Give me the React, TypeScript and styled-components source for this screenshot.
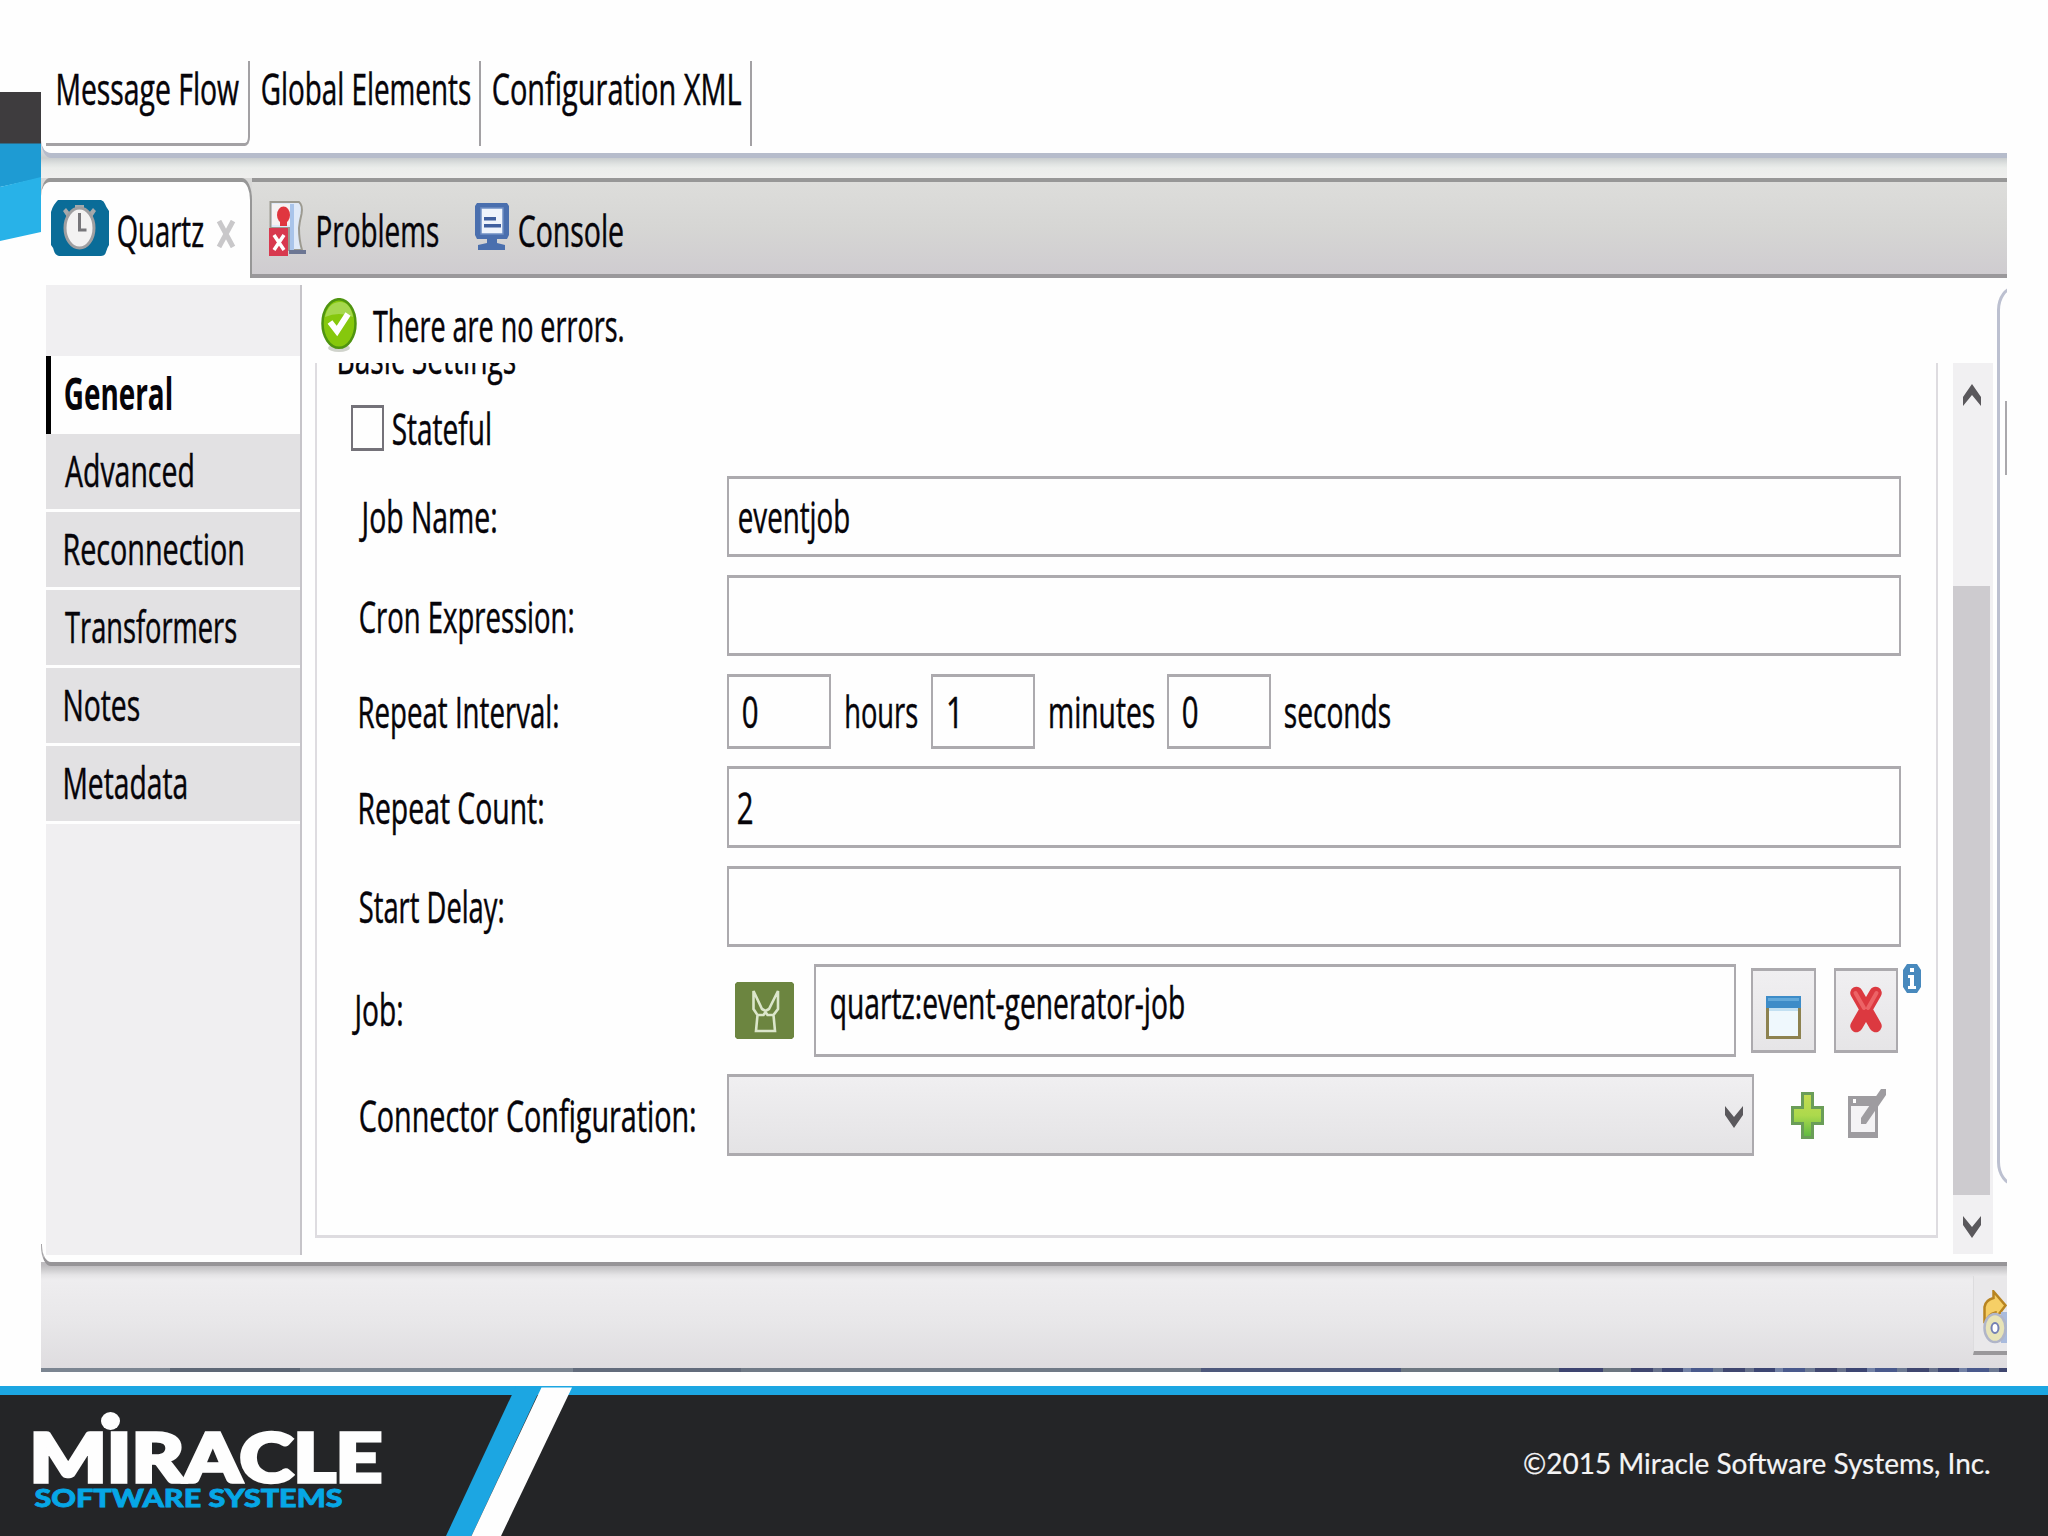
import React, { useLayoutEffect, useState } from 'react';
import styled, { createGlobalStyle } from 'styled-components';

const UI_FONT = '"Open Sans", "Noto Sans", sans-serif';
const BRAND_FONT = 'Lato, "Open Sans", sans-serif';

const GlobalStyle = createGlobalStyle`
  *, *::before, *::after { box-sizing: border-box; }
  body { margin: 0; background: #fefefe; overflow: hidden; }
  svg { display: block; flex: none; }
`;

/* ---------- condensed text fitted to a given ink width ---------- */

const FitBox = styled.span<{ $w: number; $line: number }>`
  display: block;
  flex: none;
  width: ${(p) => p.$w}px;
  height: ${(p) => p.$line}px;
  line-height: ${(p) => p.$line}px;
  white-space: nowrap;
`;

const FitInk = styled.span<{ $size: number; $weight: number; $family: string; $color: string; $stroke: number }>`
  display: inline-block;
  vertical-align: top;
  transform-origin: 0 0;
  font-family: ${(p) => p.$family};
  font-size: ${(p) => p.$size}px;
  font-weight: ${(p) => p.$weight};
  color: ${(p) => p.$color};
  -webkit-text-stroke: ${(p) => p.$stroke}px ${(p) => p.$color};
`;

interface FitProps {
  children: string;
  w: number;
  size?: number;
  line?: number;
  weight?: number;
  family?: string;
  color?: string;
  stroke?: number;
  dx?: number;
  dy?: number;
}

function Fit({
  children,
  w,
  size = 44,
  line = size,
  weight = 400,
  family = UI_FONT,
  color = '#060409',
  stroke = 0.5,
  dx = 1,
  dy = 1,
}: FitProps) {
  const [transform, setTransform] = useState('none');
  useLayoutEffect(() => {
    const ctx = document.createElement('canvas').getContext('2d');
    if (!ctx) return;
    ctx.font = `${weight} ${size}px ${family}`;
    const m = ctx.measureText(children);
    const scale = (w - dx * 2) / (m.actualBoundingBoxLeft + m.actualBoundingBoxRight);
    setTransform(`translate(${m.actualBoundingBoxLeft * scale + dx}px, ${dy}px) scaleX(${scale})`);
  }, [children, w, size, weight, family, dx, dy]);
  return (
    <FitBox $w={w} $line={line}>
      <FitInk $size={size} $weight={weight} $family={family} $color={color} $stroke={stroke} style={{ transform }}>
        {children}
      </FitInk>
    </FitBox>
  );
}

/* ---------- page frame ---------- */

const Slide = styled.div`
  width: 2048px;
  height: 1536px;
  display: flex;
  flex-direction: column;
  overflow: hidden;
  background: #fefefe;
`;

const Stage = styled.div`
  height: 1386px;
  flex: none;
  display: grid;
  grid-template-columns: 41px 1966px 41px;
`;

const Window = styled.div`
  display: flex;
  flex-direction: column;
  height: 1372px;
  background: #fefefe;
  overflow: hidden;
`;

/* ---------- file tabs ---------- */

const FileTabsBack = styled.div`
  flex: none;
  height: 178px;
  display: flex;
  flex-direction: column;
  background: linear-gradient(#fefefe 0 136px, #d8dbde 150px, #c9cdce 158px, #e0e3e2 164px, #ebedeb 168px, #efefee 178px);
`;

const FileTabs = styled.div`
  height: 158px;
  padding: 61px 0 0 5px;
  display: flex;
  align-items: flex-start;
  background: #fefefe;
  border-bottom: 5px solid #b6bccb;
  border-bottom-left-radius: 10px 18px;
`;

const FileTab = styled.div<{ $w: number; $active?: boolean }>`
  width: ${(p) => p.$w}px;
  height: 85px;
  padding: 3px 0 0 11px;
  border-right: 2px solid #a3a1a4;
  ${(p) => p.$active && 'border-bottom: 3px solid #a3a1a4; border-bottom-right-radius: 5px 9px;'}
`;

/* ---------- view tabs ---------- */

const ViewTabs = styled.div`
  flex: none;
  height: 100px;
  display: flex;
  background: #d8d8d7;
`;

const ActiveView = styled.div`
  width: 211px;
  height: 100px;
  padding: 0 0 0 10px;
  display: flex;
  align-items: flex-start;
  background: #fefefe;
  border-top: 4px solid #979797;
  border-right: 2px solid #979797;
  border-top-left-radius: 9px 18px;
  border-top-right-radius: 10px 22px;
`;

const OtherViews = styled.div`
  flex: 1;
  display: flex;
  align-items: flex-start;
  padding-left: 17px;
  background: linear-gradient(#dddddb, #d6d6d4 50%, #cfccd0);
  border-top: 4px solid #979797;
  border-bottom: 4px solid #9a989b;
`;

const Cell = styled.div<{ $top: number; $left?: number }>`
  flex: none;
  margin: ${(p) => p.$top}px 0 0 ${(p) => p.$left ?? 0}px;
`;

const FieldCell = styled.div<{ $left: number }>`
  flex: none;
  height: 100%;
  margin-left: ${(p) => p.$left}px;
`;

/* ---------- editor body ---------- */

const Body = styled.div`
  flex: none;
  height: 984px;
  display: flex;
  padding-left: 5px;
  overflow: hidden;
`;

const SideNav = styled.nav`
  flex: none;
  width: 256px;
  height: 970px;
  margin-top: 7px;
  padding-top: 71px;
  background: #f0eff1;
  border-right: 2px solid #c6c4c9;
`;

const NavItem = styled.div<{ $active?: boolean }>`
  height: 78px;
  padding: ${(p) => (p.$active ? '14px 0 0 13px' : '13px 0 0 18px')};
  background: ${(p) => (p.$active ? '#fefefe' : '#e2e1e3')};
  border-left: ${(p) => (p.$active ? '5px solid #000' : '0')};
  border-bottom: ${(p) => (p.$active ? '0' : '3px solid #fefefe')};
`;

const Content = styled.main`
  flex: none;
  width: 1651px;
  display: flex;
  flex-direction: column;
`;

const StatusLine = styled.div`
  flex: none;
  height: 85px;
  padding: 20px 0 0 19px;
  display: flex;
`;

const Viewport = styled.div`
  flex: none;
  height: 892px;
  overflow: hidden;
`;

const Group = styled.section`
  width: 1623px;
  height: 875px;
  margin-left: 13px;
  border: 2px solid #dedce0;
  border-top: 0;
  border-bottom: 3px solid #dedce0;
  display: flow-root;
`;

const GroupTitle = styled.div`
  margin: -29px 0 0 21px;
  height: 71px;
`;

const CheckRow = styled.div`
  display: flex;
  height: 46px;
  margin: 0 0 25px 34px;
`;

const CheckBox = styled.div`
  width: 33px;
  height: 46px;
  border: solid #747279;
  border-width: 3px 2px;
`;

const Row = styled.div<{ $h: number; $gap?: number }>`
  display: flex;
  align-items: flex-start;
  height: ${(p) => p.$h}px;
  margin-bottom: ${(p) => p.$gap ?? 18}px;
`;

const LabelCell = styled.div<{ $drop: number; $indent?: number }>`
  flex: none;
  width: 410px;
  padding: ${(p) => p.$drop}px 0 0 ${(p) => p.$indent ?? 42}px;
`;

const Field = styled.div<{ $w: number; $drop?: number; $pad?: number }>`
  flex: none;
  width: ${(p) => p.$w}px;
  height: 100%;
  padding: ${(p) => p.$drop ?? 0}px 0 0 ${(p) => p.$pad ?? 0}px;
  border: solid #acaaae;
  border-width: 3px 2px;
`;

const Select = styled(Field)`
  display: flex;
  justify-content: flex-end;
  align-items: flex-start;
  padding: 29px 9px 0 0;
  background: linear-gradient(#f0eff1, #e4e3e5);
`;

const IconButton = styled.div<{ $left: number; $w: number }>`
  flex: none;
  width: ${(p) => p.$w}px;
  height: 85px;
  margin: 4px 0 0 ${(p) => p.$left}px;
  display: flex;
  justify-content: center;
  border: solid #acaaae;
  border-width: 3px 2px;
  background: linear-gradient(#f0eff1, #e6e5e7);
`;

/* ---------- scrollbar and neighbouring panel ---------- */

const ScrollBar = styled.div`
  flex: none;
  width: 40px;
  height: 891px;
  margin-top: 85px;
  display: flex;
  flex-direction: column;
  background: #f1f0f2;
`;

const ScrollGap = styled.div<{ $h: number; $top: number }>`
  height: ${(p) => p.$h}px;
  padding: ${(p) => p.$top}px 0 0 10px;
`;

const Thumb = styled.div`
  width: 37px;
  height: 609px;
  background: #cdcbcf;
`;

const NextPanel = styled.aside`
  flex: none;
  width: 30px;
  height: 900px;
  margin: 8px 0 0 4px;
  padding: 112px 0 0 5px;
  border: 3px solid #bcc0d0;
  border-radius: 18px 0 0 18px / 24px 0 0 24px;
`;

const NextPanelField = styled.div`
  width: 3px;
  height: 74px;
  background: #aaa8ac;
`;

/* ---------- bottom bar ---------- */

const BottomBar = styled.div`
  flex: none;
  height: 110px;
  display: flex;
  justify-content: flex-end;
  align-items: flex-start;
  padding-top: 14px;
  position: relative;
  background: linear-gradient(#bdbbbe 3px, #cfced0 8px, #e5e4e6 13px, #eeedef 18px, #e8e7e9 60px, #dedcdf 107px);
  border-bottom: 4px solid #66707f;
`;

const BottomEdge = styled.div`
  position: absolute;
  left: 0;
  right: 0;
  top: -18px;
  height: 22px;
  border-bottom: 4px solid #979598;
  border-left: 1px solid #a8a6a9;
  border-bottom-left-radius: 10px 20px;
`;

const TaskStrip = styled.div`
  position: absolute;
  left: 0;
  bottom: -4px;
  width: 100%;
  height: 4px;
  background:
    repeating-linear-gradient(90deg, #3f466f 0 22px, #67718b 22px 31px, #3c4572 31px 52px, #7382a6 52px 60px, #49598c 60px 82px, #6d7a93 82px 92px) 1590px 0 / 376px 4px no-repeat,
    linear-gradient(90deg, #7b8591 0 129px, #5d6775 129px 259px, #7b8591 259px 532px, #626b7b 532px 700px, #707a86 700px 1160px, #4d587b 1160px 1360px, #6c7680 1360px 1518px, #3d4470 1518px 1562px, #6c7680 1562px);
`;

const TrayTab = styled.div`
  width: 34px;
  height: 79px;
  padding: 14px 0 0 9px;
  overflow: hidden;
  background: #e9e8ea;
  border-left: 1px solid #dddcde;
  border-bottom: 4px solid #9a989b;
`;

/* ---------- footer ---------- */

const Footer = styled.footer`
  flex: none;
  height: 150px;
  display: flex;
  justify-content: space-between;
  background: #242527;
  border-top: 9px solid #1ca6e2;
`;

const Brand = styled.div`
  position: relative;
  width: 412px;
  padding: 34px 0 0 34px;
`;

const BrandName = styled.div`
  height: 56px;
`;

const BrandDot = styled.span`
  position: absolute;
  left: 101px;
  top: 17px;
  width: 19px;
  height: 18px;
  border-radius: 50%;
  background: #fefefe;
`;

const Slashes = styled.svg`
  margin-top: -9px;
`;

const Legal = styled.div`
  margin-left: auto;
  padding: 54px 58px 0 0;
`;

/* ---------- icons ---------- */

const SideArt = () => (
  <svg width="41" height="1386" viewBox="0 0 41 1386">
    <path d="M0 92h41v52H0z" fill="#3e3c3e" />
    <path d="M0 143.500h41V178L0 187z" fill="#1e9bd3" />
    <path d="M0 187 41 177v55L0 241z" fill="#28b2e8" />
  </svg>
);

const ClockIcon = () => (
  <svg width="58" height="56" viewBox="0 0 58 56">
    <path d="M7 0h43q3 1 4 4t4 7v34q-2 3-3 7t-5 4H8q-4-1-5-5t-3-6V12q1-4 3-7t4-5z" fill="#0a6c98" />
    <path d="M24 5h9v5h-9zM12 11l3-3 4 5-3 4zM45 11l-3-3-4 5 3 4z" fill="#a5a9ac" />
    <ellipse cx="28.500" cy="28" rx="14.500" ry="20" fill="#f3f2f2" stroke="#a09fa1" strokeWidth="3" />
    <path d="M28.500 13v17h7" fill="none" stroke="#77767a" strokeWidth="3" />
  </svg>
);

const CloseIcon = () => (
  <svg width="20" height="28" viewBox="0 0 20 28">
    <path d="M3 1 17 27M17 1 3 27" stroke="#c9c8ca" strokeWidth="5" />
  </svg>
);

const ProblemsIcon = () => (
  <svg width="37" height="56" viewBox="0 0 37 56">
    <path d="M1.500 2H30q4 3 2.500 12-2 8-2.500 14 0 12 3 22H20V28H1.500z" fill="#dfe9f8" stroke="#9c9a90" strokeWidth="2" />
    <path d="M21 4h4v46h-4z" fill="#a9c4ea" />
    <path d="M3 4h18v21H3z" fill="#f6f2f2" />
    <ellipse cx="14.500" cy="15" rx="6.500" ry="8.500" fill="#e0363f" />
    <path d="M11 21h7v5h-7z" fill="#e0363f" />
    <path d="M20 50h17v4H20z" fill="#6c7693" />
    <path d="M0 28h19v28H0z" fill="#d8394f" />
    <path d="m5 35 10 15M15 35 5 50" stroke="#fff" strokeWidth="3.500" />
  </svg>
);

const ConsoleIcon = () => (
  <svg width="34" height="47" viewBox="0 0 34 47">
    <path d="M2 0h30l2 3v29l-2 4H2l-2-4V3z" fill="#4a6fae" />
    <path d="M6 5h22v26H6z" fill="#eff4fc" stroke="#6f8fc4" strokeWidth="1.500" />
    <path d="M9 14h12v3.500H9zM9 21h17v3.500H9z" fill="#3f5f9f" />
    <path d="M12 36h10v4l8 2v5H3v-5l9-2z" fill="#4a6fae" />
  </svg>
);

const OkIcon = () => (
  <svg width="36" height="54" viewBox="0 0 36 54">
    <ellipse cx="18" cy="50" rx="11" ry="4" fill="#d0d3cc" />
    <ellipse cx="18" cy="25.500" rx="16.500" ry="24.300" fill="#86c80c" stroke="#4f9410" strokeWidth="2.500" />
    <path d="M4 19Q7 5 18 4t14 15q-14-6-28 0z" fill="#a6d84e" />
    <path d="m9 24 7 9 11-17" fill="none" stroke="#fff" strokeWidth="6" />
  </svg>
);

const MuleIcon = () => (
  <svg width="59" height="57" viewBox="0 0 59 57">
    <path d="M2 0h55l2 2v53l-2 2H2l-2-2V2z" fill="#6c8540" />
    <path
      d="M18.500 9v18l4 6-1.500 16h19l-1.500-16 4.500-6V9l-9 18-3.500 2-3.500-2zM22.500 33h6l2-3 2 3h6"
      fill="none"
      stroke="#dbe6ca"
      strokeWidth="2.600"
    />
  </svg>
);

const WindowIcon = () => (
  <svg width="35" height="43" viewBox="0 0 35 43">
    <path d="M1.500 1h32v40.500h-32z" fill="#eff8fd" stroke="#8d8250" strokeWidth="3" />
    <path d="M0 0h35v12H0z" fill="#3d8cc8" />
    <path d="M2 2h31v3H2z" fill="#63a9da" />
    <path d="M3 12h29v3H3z" fill="#c2e0f2" />
  </svg>
);

const DeleteIcon = () => (
  <svg width="34" height="49" viewBox="0 0 34 49">
    <path d="M7.500 8 26.500 41M26.500 8 7.500 41" fill="none" stroke="#dc3940" strokeWidth="12.500" strokeLinecap="round" />
    <path d="M6.500 8 15 23M27.500 8 19 23" fill="none" stroke="#ec6366" strokeWidth="4" strokeLinecap="round" />
  </svg>
);

const InfoIcon = () => (
  <svg width="18" height="29" viewBox="0 0 18 29">
    <path d="M4 0h10l4 6v17l-4 6H4l-4-6V6z" fill="#4889bd" />
    <path d="M7 4h4v4H7zM5 11h6v11h2v3H5v-3h2v-8H5z" fill="#fff" />
  </svg>
);

const PlusIcon = () => (
  <svg width="33" height="47" viewBox="0 0 33 47">
    <defs>
      <linearGradient id="plus" x1="0" y1="0" x2="0" y2="1">
        <stop offset="0" stopColor="#c4dc52" />
        <stop offset=".5" stopColor="#acd94c" />
        <stop offset="1" stopColor="#5cb842" />
      </linearGradient>
    </defs>
    <path d="M11.500 1.500h10v14h10v16h-10v14h-10v-14h-10v-16h10z" fill="url(#plus)" stroke="#6a9d58" strokeWidth="3" />
  </svg>
);

const EditIcon = () => (
  <svg width="38" height="50" viewBox="0 0 38 50">
    <path d="M1.500 10h27v37h-27z" fill="#f4f3f5" stroke="#9e9ca0" strokeWidth="3" />
    <path d="M0 7h30v10H0zM0 43h30v6H0z" fill="#9e9ca0" />
    <path d="M5 10h3v4H5z" fill="#fff" />
    <path d="M38 0v6L18 35h-5v-6L33 0z" fill="#9e9ca0" />
  </svg>
);

const Chevron = ({ up = false }: { up?: boolean }) => (
  <svg width="18" height="22" viewBox="0 0 18 22">
    <path d={up ? 'M9 0l9 13v9l-9-11-9 11v-9z' : 'M9 22l9-13V0L9 11 0 0v9z'} fill="#5a585c" />
  </svg>
);

const TrayIcon = () => (
  <svg width="36" height="54" viewBox="0 0 36 54">
    <path d="M1.500 32V17q1-7 9-9V1.500l12 14-10 13v-6q-8 2-9 9.500z" fill="#f6cf66" stroke="#b88420" strokeWidth="2.500" />
    <path d="M18 22h18v31H18z" fill="#a9bbdd" />
    <ellipse cx="12" cy="38" rx="10.500" ry="14" fill="#e8e4b8" stroke="#b0b5c8" strokeWidth="2.500" />
    <ellipse cx="12" cy="38" rx="3.500" ry="5" fill="#fff" stroke="#7480b4" strokeWidth="2" />
  </svg>
);

/* ---------- data ---------- */

const fileTabs = [
  { text: 'Message Flow', ink: 183, w: 204, active: true },
  { text: 'Global Elements', ink: 210, w: 231 },
  { text: 'Configuration XML', ink: 250, w: 271 },
];

const navItems = [
  { text: 'General', ink: 108, active: true },
  { text: 'Advanced', ink: 130 },
  { text: 'Reconnection', ink: 180 },
  { text: 'Transformers', ink: 173 },
  { text: 'Notes', ink: 76 },
  { text: 'Metadata', ink: 123 },
];

const FIELD_W = 1174;

export default function App() {
  return (
    <>
      <GlobalStyle />
      <Slide>
        <Stage>
          <SideArt />
          <Window>
            <FileTabsBack>
              <FileTabs>
                {fileTabs.map((t) => (
                  <FileTab key={t.text} $w={t.w} $active={t.active}>
                    <Fit w={t.ink} dy={2}>{t.text}</Fit>
                  </FileTab>
                ))}
              </FileTabs>
            </FileTabsBack>

            <ViewTabs>
              <ActiveView>
                <Cell $top={18}><ClockIcon /></Cell>
                <Cell $top={25} $left={8}><Fit w={87}>Quartz</Fit></Cell>
                <Cell $top={38} $left={12}><CloseIcon /></Cell>
              </ActiveView>
              <OtherViews>
                <Cell $top={18}><ProblemsIcon /></Cell>
                <Cell $top={25} $left={11}><Fit w={122}>Problems</Fit></Cell>
                <Cell $top={21} $left={36}><ConsoleIcon /></Cell>
                <Cell $top={25} $left={9}><Fit w={106}>Console</Fit></Cell>
              </OtherViews>
            </ViewTabs>

            <Body>
              <SideNav>
                {navItems.map((n) => (
                  <NavItem key={n.text} $active={n.active}>
                    <Fit w={n.ink} weight={n.active ? 700 : 400} stroke={n.active ? 0 : 0.5}>{n.text}</Fit>
                  </NavItem>
                ))}
              </SideNav>

              <Content>
                <StatusLine>
                  <OkIcon />
                  <Cell $top={4} $left={15}><Fit w={252}>There are no errors.</Fit></Cell>
                </StatusLine>
                <Viewport>
                  <Group>
                    <GroupTitle><Fit w={178}>Basic Settings</Fit></GroupTitle>
                    <CheckRow>
                      <CheckBox />
                      <Cell $top={0} $left={8}><Fit w={99}>Stateful</Fit></Cell>
                    </CheckRow>
                    <Row $h={81}>
                      <LabelCell $drop={17} $indent={41}><Fit w={139}>Job Name:</Fit></LabelCell>
                      <Field $w={FIELD_W} $drop={14} $pad={9}><Fit w={112}>eventjob</Fit></Field>
                    </Row>
                    <Row $h={81}>
                      <LabelCell $drop={18}><Fit w={215}>Cron Expression:</Fit></LabelCell>
                      <Field $w={FIELD_W} />
                    </Row>
                    <Row $h={75} $gap={17}>
                      <LabelCell $drop={14}><Fit w={200}>Repeat Interval:</Fit></LabelCell>
                      <Field $w={104} $drop={11} $pad={13}><Fit w={16}>0</Fit></Field>
                      <Cell $top={14} $left={14}><Fit w={73}>hours</Fit></Cell>
                      <FieldCell $left={13}>
                        <Field $w={104} $drop={11} $pad={14}><Fit w={11}>1</Fit></Field>
                      </FieldCell>
                      <Cell $top={14} $left={14}><Fit w={106}>minutes</Fit></Cell>
                      <FieldCell $left={12}>
                        <Field $w={104} $drop={11} $pad={13}><Fit w={16}>0</Fit></Field>
                      </FieldCell>
                      <Cell $top={14} $left={13}><Fit w={107}>seconds</Fit></Cell>
                    </Row>
                    <Row $h={82}>
                      <LabelCell $drop={18}><Fit w={185}>Repeat Count:</Fit></LabelCell>
                      <Field $w={FIELD_W} $drop={15} $pad={8}><Fit w={16}>2</Fit></Field>
                    </Row>
                    <Row $h={81} $gap={17}>
                      <LabelCell $drop={17}><Fit w={145}>Start Delay:</Fit></LabelCell>
                      <Field $w={FIELD_W} />
                    </Row>
                    <Row $h={93} $gap={17}>
                      <LabelCell $drop={22} $indent={34}><Fit w={52}>Job:</Fit></LabelCell>
                      <Cell $top={18} $left={8}><MuleIcon /></Cell>
                      <FieldCell $left={20}>
                        <Field $w={922} $drop={12} $pad={14}><Fit w={355}>quartz:event-generator-job</Fit></Field>
                      </FieldCell>
                      <IconButton $left={15} $w={65}><Cell $top={25}><WindowIcon /></Cell></IconButton>
                      <IconButton $left={18} $w={64}><Cell $top={14}><DeleteIcon /></Cell></IconButton>
                      <Cell $top={0} $left={5}><InfoIcon /></Cell>
                    </Row>
                    <Row $h={82}>
                      <LabelCell $drop={18}><Fit w={337}>Connector Configuration:</Fit></LabelCell>
                      <Select $w={1027}><Chevron /></Select>
                      <Cell $top={18} $left={37}><PlusIcon /></Cell>
                      <Cell $top={15} $left={24}><EditIcon /></Cell>
                    </Row>
                  </Group>
                </Viewport>
              </Content>

              <ScrollBar>
                <ScrollGap $h={223} $top={21}><Chevron up /></ScrollGap>
                <Thumb />
                <ScrollGap $h={59} $top={21}><Chevron /></ScrollGap>
              </ScrollBar>
              <NextPanel><NextPanelField /></NextPanel>
            </Body>

            <BottomBar>
              <BottomEdge />
              <TrayTab><TrayIcon /></TrayTab>
              <TaskStrip />
            </BottomBar>
          </Window>
        </Stage>

        <Footer>
          <Brand>
            <BrandDot />
            <BrandName>
              <Fit w={348} size={67} line={54} weight={900} family={BRAND_FONT} color="#fefefe" stroke={3.5} dx={1.5} dy={0}>
                MIRACLE
              </Fit>
            </BrandName>
            <Fit w={308} size={25} weight={900} family={BRAND_FONT} color="#06a7e6" stroke={0.8} dx={0.5} dy={0}>
              SOFTWARE SYSTEMS
            </Fit>
          </Brand>
          <Slashes width="160" height="150" viewBox="412 0 160 150">
            <path d="M516 0h25.500L471.500 150H446z" fill="#1ca6e2" />
            <path d="M541.500 1.500H572L501 150h-29.500z" fill="#fefefe" />
          </Slashes>
          <Legal>
            <Fit w={466} size={28.5} family={BRAND_FONT} color="#f4f4f5" stroke={0.2} dx={0} dy={0}>
              ©2015 Miracle Software Systems, Inc.
            </Fit>
          </Legal>
        </Footer>
      </Slide>
    </>
  );
}
